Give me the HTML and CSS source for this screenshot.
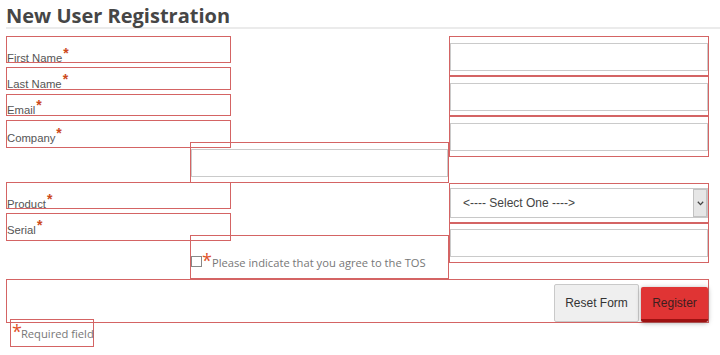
FILE: index.html
```html
<!DOCTYPE html>
<html lang="en">
<head>
<meta charset="utf-8">
<title>New User Registration</title>
<link rel="stylesheet" href="styles.css">
</head>
<body>
<div class="page">
  <h1 class="title">New User Registration</h1>
  <form class="form">
    <div class="top">
      <div class="labels">
        <div class="lbl lbl-first">First Name<span class="req">*</span></div>
        <div class="lbl lbl-last">Last Name<span class="req">*</span></div>
        <div class="lbl lbl-email">Email<span class="req">*</span></div>
        <div class="lbl lbl-company">Company<span class="req">*</span></div>
        <div class="lbl lbl-product">Product<span class="req">*</span></div>
        <div class="lbl lbl-serial">Serial<span class="req">*</span></div>
      </div>
      <div class="middle">
        <div class="cell cell-company"><input class="txt" type="text"></div>
        <div class="cell tos"><input type="checkbox" class="chk"><span class="star">*</span><span class="tos-text">Please indicate that you agree to the TOS</span></div>
      </div>
      <div class="fields">
        <div class="cell cell-input"><input class="txt" type="text"></div>
        <div class="cell cell-input"><input class="txt" type="text"></div>
        <div class="cell cell-input cell-third"><input class="txt" type="text"></div>
        <div class="cell cell-select">
          <div class="select">
            <select class="sel"><option>&lt;---- Select One ----&gt;</option></select>
            <span class="arrow"><svg width="7" height="5" viewBox="0 0 7 5"><polyline points="0.8,0.8 3.5,3.6 6.2,0.8" fill="none" stroke="#444" stroke-width="1.3"/></svg></span>
          </div>
        </div>
        <div class="cell cell-serial"><input class="txt" type="text"></div>
      </div>
    </div>
    <div class="actions">
      <button type="reset" class="btn btn-reset">Reset Form</button>
      <button type="submit" class="btn btn-register">Register</button>
    </div>
    <div class="required"><span class="star star-tight">*</span>Required field</div>
  </form>
</div>
</body>
</html>
```
FILE: styles.css
```css
* { box-sizing: border-box; }
body {
  margin: 0;
  background: #fff;
  font-family: "Liberation Sans", Arial, sans-serif;
}
.page { padding-left: 6px; }
.title {
  margin: 0;
  padding-top: 4px;
  font-family: "Open Sans", sans-serif;
  font-weight: 700;
  font-size: 20px;
  line-height: 23px;
  color: #464646;
  border-bottom: 2px solid #ebebeb;
}
.form { width: 703px; margin-top: 7px; }
.top {
  display: grid;
  grid-template-columns: 184px 41px 218px 260px;
  height: 243px;
}
.labels { grid-column: 1 / 3; grid-row: 1; display: flex; flex-direction: column; }
.middle { grid-column: 2 / 4; grid-row: 1; display: flex; flex-direction: column; padding-top: 106px; }
.fields { grid-column: 4 / 5; grid-row: 1; display: flex; flex-direction: column; }

.lbl {
  border: 1px solid #d46464;
  font-size: 11.3px;
  line-height: 13px;
  color: #555;
  margin-bottom: 4px;
  white-space: nowrap;
}
.lbl-first { height: 27px; padding-top: 14.5px; }
.lbl-last { height: 23px; padding-top: 9.5px; }
.lbl-email { height: 22px; padding-top: 8.5px; }
.lbl-company { height: 28px; padding-top: 10.5px; margin-bottom: 34px; }
.lbl-product { height: 27px; padding-top: 14.5px; }
.lbl-serial { height: 28px; padding-top: 9.5px; }
.req {
  color: #cc4a1c;
  font-size: 14px;
  font-weight: 700;
  line-height: 0;
  vertical-align: 4px;
  margin-left: 1px;
}

.cell { border: 1px solid #d46464; }
.cell-company { height: 41px; padding-top: 6px; margin-bottom: 52px; }
.cell-input { height: 40px; padding-top: 6px; }
.cell-third { height: 41px; margin-bottom: 26px; }
.cell-select { height: 40px; padding-top: 4px; }
.cell-serial { height: 40px; padding-top: 5px; }

.txt {
  display: block;
  width: 100%;
  height: 28px;
  margin: 0;
  padding: 0 6px;
  border: 1px solid #cacaca;
  background: #fff;
  font: 12px "Liberation Sans", Arial, sans-serif;
}

.select { position: relative; height: 30px; }
.sel {
  -webkit-appearance: none;
  appearance: none;
  display: block;
  width: 100%;
  height: 30px;
  margin: 0;
  padding: 0 0 0 12px;
  border: 1px solid #c8c8c8;
  border-radius: 0;
  background: #fff;
  font: 12px "Liberation Sans", Arial, sans-serif;
  color: #444;
}
.arrow {
  position: absolute;
  top: 1px;
  right: 1px;
  bottom: 1px;
  width: 14px;
  background: #e6e6e6;
  border: 1px solid #c2c2c2;
  display: flex;
  align-items: center;
  justify-content: center;
}
.arrow svg { display: block; }

.tos {
  height: 44px;
  padding-top: 19px;
  font-family: "Open Sans", sans-serif;
  font-size: 11.2px;
  line-height: 16px;
  color: #777;
  white-space: nowrap;
}
.chk {
  -webkit-appearance: none;
  appearance: none;
  display: inline-block;
  width: 11px;
  height: 11px;
  margin: 0;
  border: 1px solid #888;
  background: #fff;
  vertical-align: baseline;
}
.star {
  font-family: "Open Sans", sans-serif;
  font-size: 18px;
  line-height: 0;
  color: #e0522a;
}
.star-tight { margin-right: -1px; }

.actions {
  height: 44px;
  border: 1px solid #d46464;
  display: flex;
  justify-content: flex-end;
  align-items: flex-end;
  gap: 2px;
}
.btn {
  margin: 0;
  font: 12px "Liberation Sans", Arial, sans-serif;
  cursor: pointer;
}
.btn-reset {
  width: 85px;
  height: 38px;
  background: #efefef;
  border: 1px solid #c9c9c9;
  border-radius: 2px;
  color: #333;
}
.btn-register {
  width: 67px;
  height: 35px;
  background: #e03434;
  border: none;
  border-bottom: 3px solid #9e1212;
  border-radius: 2px;
  color: #3d1f1f;
  box-shadow: 0 1px 5px rgba(0, 0, 0, 0.35);
}

.required {
  width: 84px;
  height: 28px;
  margin: -4px 0 0 4px;
  padding: 6px 0 0 1px;
  border: 1px solid #d46464;
  font-family: "Open Sans", sans-serif;
  font-size: 11.2px;
  line-height: 16px;
  color: #777;
  white-space: nowrap;
}
```
